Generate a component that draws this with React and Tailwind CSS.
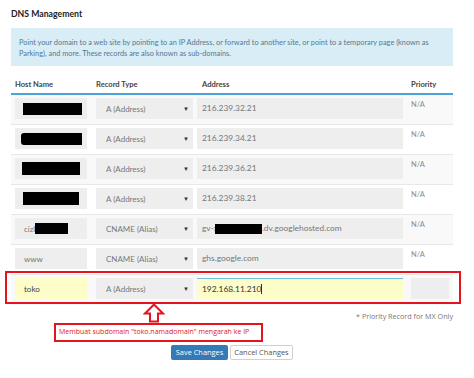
import React from "react";

const rows = [
  { host: { pre: "", black: [23, 59, 12] }, type: "A (Address)", addr: "216.239.32.21" },
  { host: { pre: "", black: [21, 61, 12], round: true }, type: "A (Address)", addr: "216.239.34.21" },
  { host: { pre: "", black: [22, 58, 13] }, type: "A (Address)", addr: "216.239.36.21" },
  { host: { pre: "", black: [23, 56, 13] }, type: "A (Address)", addr: "216.239.38.21" },
  { host: { pre: "cizl", black: [35, 33, 11] }, type: "CNAME (Alias)", addr: null },
  { host: { pre: "www" }, type: "CNAME (Alias)", addr: "ghs.google.com" },
];

function Select({ label }) {
  return (
    <div className="h-[21px] w-[97px] bg-[#eeeeee] flex items-center justify-between pl-[10px] pr-[4px] text-[#777] text-[8px]">
      <span>{label}</span>
      <span className="text-[6px] text-[#333]">▼</span>
    </div>
  );
}

function HostInput({ host }) {
  return (
    <div className="h-[21px] w-[72px] bg-[#eeeeee] flex items-center text-[#777] text-[8px] relative">
      {host.pre && <span className="pl-[9px]">{host.pre}</span>}
      {host.black && (
        <span
          className={"absolute bg-black " + (host.round ? "rounded-l-[3px]" : "")}
          style={{ left: host.black[0] - 15, width: host.black[1], height: host.black[2], top: (21 - host.black[2]) / 2 }}
        />
      )}
    </div>
  );
}

export default function App() {
  return (
    <div className="w-[474px] h-[378px] bg-white overflow-hidden" style={{ fontFamily: "Lato, 'Open Sans', sans-serif" }}>
      <div className="ml-[11px] w-[442px]">
        <div className="pt-[8px] h-[28px] text-[8.7px] leading-[12px] font-bold text-[#222]">DNS Management</div>
        <div className="bg-[#d9edf7] h-[38px] pt-[10px] pl-[8px] pr-[16px] text-[7.35px] leading-[10.6px] text-[#55798f]">
          Point your domain to a web site by pointing to an IP Address, or forward to another site, or point to a temporary page (known as Parking), and more. These records are also known as sub-domains.
        </div>
        <div className="mt-[10px] grid grid-cols-[81px_101px_214px_46px] h-[19px] border-b-2 border-[#4ba1dc] text-[7.6px] font-bold text-[#444] items-center">
          <div className="pl-[4px]">Host Name</div>
          <div className="pl-[4px]">Record Type</div>
          <div className="pl-[9px]">Address</div>
          <div className="pl-[4px]">Priority</div>
        </div>
        {rows.map((r, i) => (
          <div
            key={i}
            className={"grid grid-cols-[81px_101px_214px_46px] h-[30px] pt-[3px] border-b border-[#e8e8e8] " + (i % 2 === 0 ? "bg-[#f9f9f9]" : "bg-white")}
          >
            <div className="pl-[4px]"><HostInput host={r.host} /></div>
            <div className="pl-[4px]"><Select label={r.type} /></div>
            <div className="pl-[4px]">
              <div className="h-[21px] w-[206px] bg-[#eeeeee] flex items-center pl-[5px] text-[#777] text-[8.4px]">
                {r.addr ? (
                  r.addr
                ) : (
                  <>
                    <span>gv-x</span>
                    <span className="inline-block w-[47px] h-[10px] bg-black ml-[-3px]" />
                    <span>.dv.googlehosted.com</span>
                  </>
                )}
              </div>
            </div>
            <div className="pl-[4px] pt-[1px] text-[7.5px] leading-[12px] text-[#888]">N/A</div>
          </div>
        ))}
        <div className="relative grid grid-cols-[81px_101px_214px_46px] h-[30px] pt-[3px] bg-[#f9f9f9]">
          <div className="pl-[4px]">
            <div className="h-[21px] w-[72px] bg-[#fdfdc9] flex items-center pl-[9px] text-[#444] text-[8px]">toko</div>
          </div>
          <div className="pl-[4px]"><Select label="A (Address)" /></div>
          <div className="pl-[4px]">
            <div className="h-[21px] w-[206px] bg-[#fdfdc9] border-t border-[#6cc3d8] flex items-center pl-[5px] text-[#333] text-[8.4px]">
              192.168.11.210<span className="inline-block w-px h-[10px] bg-[#333]" />
            </div>
          </div>
          <div className="pl-[4px]">
            <div className="h-[21px] w-[38px] bg-[#eeeeee]" />
          </div>
          <div className="absolute left-[-6px] top-[-4px] w-[456px] h-[33px] border-2 border-[#e3141e] pointer-events-none" />
          <svg className="absolute left-[132px] top-[28px]" width="22" height="20" viewBox="0 0 22 20">
            <path d="M11 1.5 L20 10.5 L15 10.5 L15 18.5 L7 18.5 L7 10.5 L2 10.5 Z" fill="white" stroke="#e3141e" strokeWidth="2" strokeLinejoin="miter" />
          </svg>
        </div>
        <div className="mt-[5px] h-[12px] leading-[12px] text-right text-[7.2px] text-[#777]" style={{ fontFamily: "'Open Sans', sans-serif" }}>
          * Priority Record for MX Only
        </div>
        <div className="mt-[1px] ml-[43px] w-[209px] h-[19px] border-2 border-[#e3141e] bg-white flex items-center pl-[3px] text-[7px] text-[#e3141e]" style={{ fontFamily: "'Open Sans', sans-serif" }}>
          Membuat subdomain "toko.namadomain" mengarah ke IP
        </div>
        <div className="mt-[3px] flex justify-center gap-[2px]" style={{ fontFamily: "'Open Sans', sans-serif" }}>
          <div className="w-[57px] h-[15px] bg-[#337ab7] rounded-[2px] text-white text-[7.4px] flex items-center justify-center">Save Changes</div>
          <div className="w-[63px] h-[15px] bg-white border border-[#d0d0d0] rounded-[2px] text-[#555] text-[7.4px] flex items-center justify-center">Cancel Changes</div>
        </div>
      </div>
    </div>
  );
}
